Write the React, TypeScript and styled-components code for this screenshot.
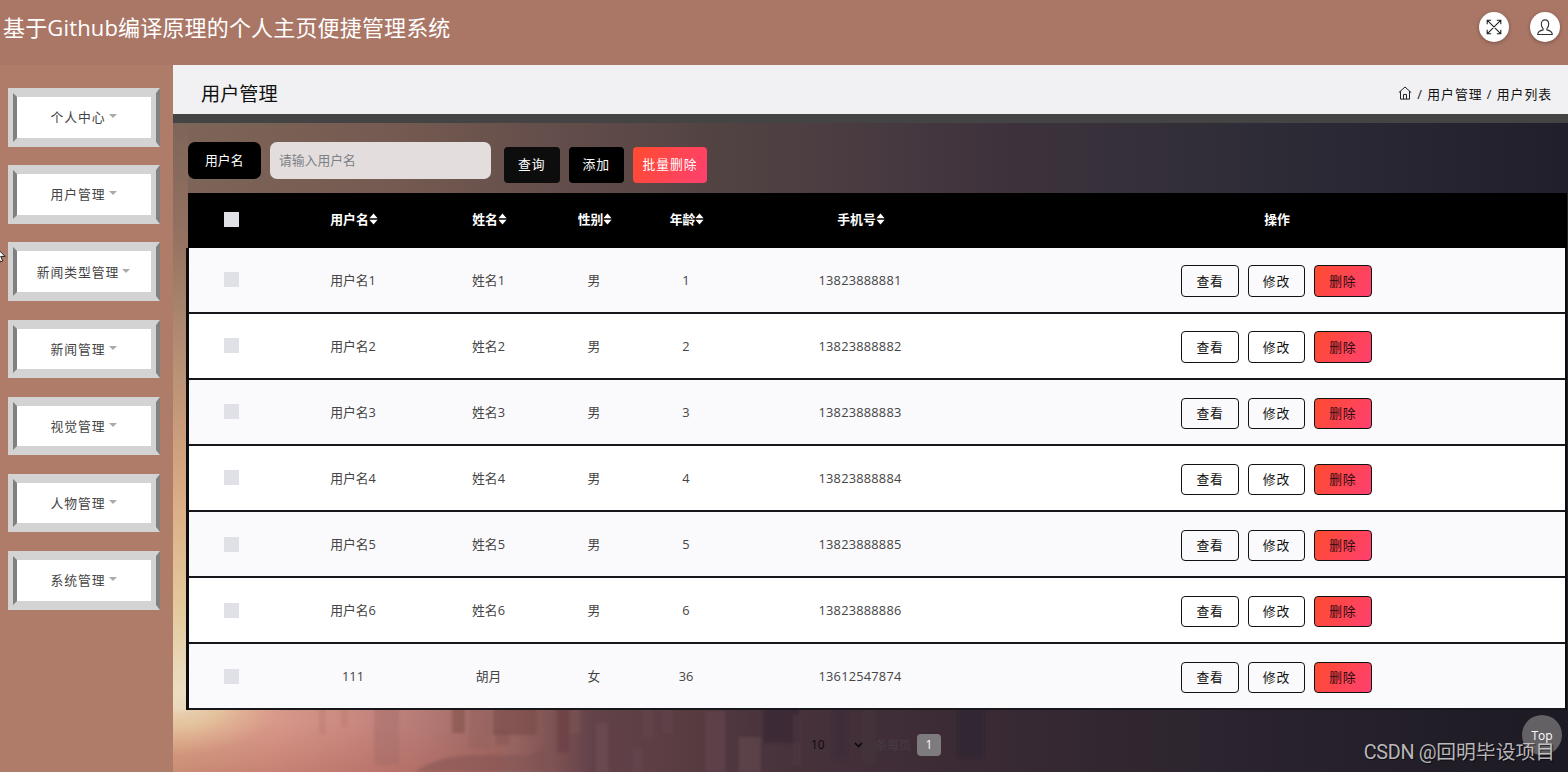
import React from "react";
import styled, { createGlobalStyle } from "styled-components";

const Global = createGlobalStyle`
  * { box-sizing: border-box; }
  html, body { margin: 0; padding: 0; }
  body {
    width: 1568px;
    height: 772px;
    overflow: hidden;
    font-family: "Open Sans", "Noto Sans CJK SC", sans-serif;
    font-size: 12.8px;
    color: #444;
  }
  button, input { font-family: inherit; }
`;

const Page = styled.div`
  position: relative;
  display: flex;
  flex-direction: column;
  width: 1568px;
  height: 772px;
  overflow: hidden;
  background: #b07c6a;
`;

const Header = styled.header`
  display: flex;
  justify-content: space-between;
  flex: none;
  height: 65px;
  padding: 12px 8px 0 3px;
  background: #aa7766;
`;

const Brand = styled.h1`
  margin: -2px 0 0;
  font-size: 22px;
  line-height: 34px;
  font-weight: 400;
  letter-spacing: 0.16px;
  color: #fff;
  white-space: nowrap;
`;

const HeaderActions = styled.div`
  display: flex;
  gap: 21px;
`;

const RoundButton = styled.button`
  display: flex;
  align-items: center;
  justify-content: center;
  width: 30px;
  height: 30px;
  padding: 0;
  border: 0;
  border-radius: 50%;
  background: #fff;
  box-shadow: 0 1px 4px rgba(0, 0, 0, 0.3);
`;

const Body = styled.div`
  display: flex;
  flex: 1;
  min-height: 0;
`;

const Sidebar = styled.nav`
  display: flex;
  flex-direction: column;
  gap: 18.7px;
  flex: none;
  width: 173px;
  padding: 23px 13px 0 8px;
`;

const MenuItem = styled.a`
  flex: none;
  height: 58.5px;
  border-style: solid;
  border-width: 5px 4px 5px 5px;
  border-color: #d3d3d3 #808080 #d3d3d3 #d3d3d3;
`;

const MenuFace = styled.span`
  display: flex;
  align-items: center;
  justify-content: center;
  gap: 3px;
  height: 100%;
  padding-right: 1px;
  border-style: solid;
  border-width: 4px 5px 4px 4px;
  border-color: #d3d3d3 #d3d3d3 #d3d3d3 #808080;
  background: #fff;
  letter-spacing: 0.95px;
  line-height: 20px;
`;

const Caret = styled.i`
  width: 0;
  height: 0;
  margin-top: -2px;
  border: 4px solid transparent;
  border-top-color: #aaa;
  border-bottom: 0;
`;

const Main = styled.main`
  position: relative;
  display: flex;
  flex-direction: column;
  flex: 1;
  min-width: 0;
`;

const Scenery = styled.svg`
  position: absolute;
  left: 0;
  top: 58px;
`;

const TitleBar = styled.div`
  position: relative;
  display: flex;
  justify-content: space-between;
  flex: none;
  height: 58px;
  padding: 0 16px 0 28px;
  border-bottom: 9px solid #444;
  background: #f1f1f3;
`;

const PageTitle = styled.h2`
  margin: 0;
  padding-top: 16px;
  font-size: 19.2px;
  line-height: 26px;
  font-weight: 400;
  color: #111;
`;

const Crumbs = styled.div`
  display: flex;
  align-items: center;
  gap: 5px;
  height: 20px;
  margin-top: 18px;
  letter-spacing: 1px;
  color: #111;
`;

const Content = styled.section`
  position: relative;
  display: flex;
  flex-direction: column;
  padding: 18.6px 1px 0 13px;
`;

const Toolbar = styled.div`
  display: flex;
  height: 51px;
  padding-left: 1.5px;
`;

const FieldLabel = styled.label`
  display: flex;
  align-items: center;
  justify-content: center;
  width: 73.500px;
  height: 37px;
  margin-right: 9px;
  padding-bottom: 1px;
  border-radius: 7px;
  background: #000;
  color: #fff;
`;

const Search = styled.input`
  width: 221px;
  height: 37px;
  margin-right: 13px;
  padding: 0 9px 1px;
  border: 0;
  border-radius: 7px;
  background: #e3dedd;
  font-size: 12.8px;
  &::placeholder { color: #7d8086; opacity: 1; }
`;

const ToolButton = styled.button<{ $tone?: "dim" | "danger"; $wide?: boolean }>`
  width: ${(p) => (p.$wide ? 74 : 55.5)}px;
  height: 36.5px;
  margin: 5px 9px 0 0;
  padding: 0 0 3px;
  border: 0;
  border-radius: 4px;
  font-size: 12.8px;
  letter-spacing: 0.9px;
  color: #fff;
  background: ${(p) =>
    p.$tone === "danger"
      ? "linear-gradient(120deg, #ff4b2f, #ff4070)"
      : p.$tone === "dim"
        ? "#0e0d0d"
        : "#000"};
`;

const TableHead = styled.div`
  display: grid;
  grid-template-columns: 89.5px 154px 117px 94px 90px 258px 1fr;
  align-items: center;
  height: 55px;
  margin: 0 0 0 1.5px;
  padding: 0 3px 1.600px 0;
  background: #000;
  color: #fff;
  font-weight: 700;
`;

const TableBody = styled.div`
  border: solid #0c0b0d;
  border-width: 0 2px 0 3px;
`;

const TableRow = styled.div<{ $odd: boolean }>`
  display: grid;
  grid-template-columns: 87px 154px 117px 94px 90px 258px 1fr;
  align-items: center;
  height: 66.1px;
  border-bottom: 2px solid #17161a;
  background: ${(p) => (p.$odd ? "#fafafc" : "#fff")};
`;

const Cell = styled.div<{ $digits?: boolean }>`
  display: flex;
  align-items: center;
  justify-content: center;
  line-height: 20px;
  letter-spacing: ${(p) => (p.$digits ? "0.23px" : "0")};
`;

const Check = styled.span`
  width: 15px;
  height: 15px;
  margin-right: 2px;
  background: #dfe1e6;
`;

const Actions = styled.div`
  display: flex;
  justify-content: center;
  gap: 9px;
  padding: 3px 1px 0 0;
`;

const RowButton = styled.button<{ $danger?: boolean }>`
  width: 57.4px;
  height: 31.5px;
  padding: 0 0 2px;
  border: 1px solid #111;
  border-radius: 4px;
  font-size: 12.8px;
  letter-spacing: 0.9px;
  color: ${(p) => (p.$danger ? "#2b0a12" : "#111")};
  background: ${(p) => (p.$danger ? "linear-gradient(120deg, #ff4b2f, #ff4070)" : "transparent")};
`;

const Pager = styled.div`
  display: flex;
  align-items: center;
  height: 22px;
  margin: 23.6px 0 0 625px;
  color: #0d0a0d;
  font-size: 12px;
`;

const PageSize = styled.span`
  display: flex;
  align-items: center;
  justify-content: space-between;
  width: 52px;
`;

const PerPage = styled.span`
  margin-left: 12px;
  width: 42px;
  color: #463c44;
`;

const PageNumber = styled.span`
  width: 24px;
  height: 22px;
  border-radius: 4px;
  background: #7e7b7e;
  color: #fff;
  line-height: 22px;
  text-align: center;
`;

const TopButton = styled.div`
  position: absolute;
  left: 1522px;
  top: 715px;
  width: 40px;
  height: 40px;
  border-radius: 50%;
  background: #636164;
  color: #fff;
  font-size: 12px;
  line-height: 41px;
  text-align: center;
`;

const Watermark = styled.div`
  position: absolute;
  right: 13px;
  top: 739px;
  font-family: Roboto, "Noto Sans CJK SC", sans-serif;
  font-size: 19.8px;
  line-height: 28px;
  color: rgba(215, 213, 216, 0.85);
  text-shadow: 1px 1px 1px rgba(0, 0, 0, 0.6);
  white-space: nowrap;
`;

const WatermarkSite = styled.span`
  letter-spacing: -0.3px;
`;

const Pointer = styled.svg`
  position: absolute;
  left: -5px;
  top: 246px;
`;

const SortIcon = () => (
  <svg width="9" height="12" viewBox="0 0 9 12">
    <path d="M4.5 .6 8.600 5.300H.4zM4.500 11.400.4 6.700h8.200z" fill="#fff" />
  </svg>
);

const ExpandIcon = () => (
  <svg width="16" height="16" viewBox="0 0 16 16" fill="none" stroke="#222" strokeWidth="1.1">
    <path d="M1.2 1.2 14.8 14.8M14.8 1.2 1.2 14.8M1.2 5.2v-4h4M10.8 1.2h4v4M14.8 10.8v4h-4M5.2 14.8h-4v-4" />
  </svg>
);

const UserIcon = () => (
  <svg width="16" height="17" viewBox="0 0 16 17" fill="none" stroke="#333" strokeWidth="1.1">
    <path d="M6.1 9.6C4.9 8.6 4.3 7 4.3 5.1 4.3 2.500 5.700.9 8 .9s3.700 1.600 3.700 4.200c0 1.900-.6 3.500-1.800 4.500v1.300c2.700.6 5.400 1.600 5.400 4.600H.7c0-3 2.700-4 5.400-4.600z" />
  </svg>
);

const HomeIcon = () => (
  <svg width="14" height="14" viewBox="0 0 14 14" fill="none" stroke="#222" strokeWidth="1">
    <path d="M.8 6.600 7 1l6.200 5.600M2.500 5.200v7.900h9V5.200M5.500 13V8.500h3V13" />
  </svg>
);

const menu = ["个人中心", "用户管理", "新闻类型管理", "新闻管理", "视觉管理", "人物管理", "系统管理"];
const heads = ["用户名", "姓名", "性别", "年龄", "手机号"];
const rows = [
  ["用户名1", "姓名1", "男", "1", "13823888881"],
  ["用户名2", "姓名2", "男", "2", "13823888882"],
  ["用户名3", "姓名3", "男", "3", "13823888883"],
  ["用户名4", "姓名4", "男", "4", "13823888884"],
  ["用户名5", "姓名5", "男", "5", "13823888885"],
  ["用户名6", "姓名6", "男", "6", "13823888886"],
  ["111", "胡月", "女", "36", "13612547874"],
];

/* x, y, width, height, fill, opacity of each tower in the skyline */
const towers: [number, number, number, number, string, number][] = [
  [146, 580, 7, 32, "#b8776c", 0.4],
  [168, 580, 7, 24, "#b8776c", 0.4],
  [201, 580, 25, 62, "#9a6860", 0.35],
  [279, 580, 13, 30, "#7a4a44", 0.5],
  [296, 580, 22, 46, "#8c5a55", 0.3],
  [320, 580, 44, 32, "#704541", 0.5],
  [322, 606, 14, 16, "#7d5050", 0.4],
  [384, 580, 12, 50, "#6a3c40", 0.6],
  [398, 580, 9, 30, "#7d5557", 0.5],
  [423, 600, 12, 49, "#75535a", 0.4],
  [470, 580, 10, 34, "#6b4a52", 0.35],
  [490, 580, 10, 30, "#6b4a52", 0.3],
  [460, 626, 9, 23, "#6b4a52", 0.4],
  [532, 588, 20, 61, "#67484f", 0.5],
  [566, 614, 22, 35, "#65474e", 0.6],
  [590, 580, 36, 40, "#34242f", 0.5],
  [620, 592, 8, 50, "#553a44", 0.3],
  [660, 580, 14, 56, "#32293a", 0.35],
  [690, 580, 12, 60, "#44343f", 0.4],
  [785, 585, 26, 50, "#241f29", 0.3],
];

const SceneryPicture = () => (
  <Scenery width="1395" height="649" viewBox="0 0 1395 649">
    <defs>
      <linearGradient id="sky">
        <stop offset="0" stopColor="#7e6559" />
        <stop offset=".16" stopColor="#745a50" />
        <stop offset=".28" stopColor="#634d4b" />
        <stop offset=".38" stopColor="#534443" />
        <stop offset=".52" stopColor="#463940" />
        <stop offset=".58" stopColor="#3f333d" />
        <stop offset=".74" stopColor="#312e38" />
        <stop offset=".88" stopColor="#272632" />
        <stop offset="1" stopColor="#211f2c" />
      </linearGradient>
      <linearGradient id="glow" x2="0" y2="1">
        <stop offset="0" stopColor="#7e6559" />
        <stop offset=".17" stopColor="#947160" />
        <stop offset=".34" stopColor="#b28c72" />
        <stop offset=".51" stopColor="#cfa17e" />
        <stop offset=".6" stopColor="#dcb088" />
        <stop offset=".75" stopColor="#e4ca9d" />
        <stop offset=".88" stopColor="#ecdec4" />
        <stop offset=".94" stopColor="#e2b990" />
        <stop offset="1" stopColor="#cf8e78" />
      </linearGradient>
      <linearGradient id="ground">
        <stop offset="0" stopColor="#dba98a" />
        <stop offset=".07" stopColor="#d8998a" />
        <stop offset=".13" stopColor="#c98880" />
        <stop offset=".173" stopColor="#b87c77" />
        <stop offset=".247" stopColor="#94625f" />
        <stop offset=".275" stopColor="#7c5152" />
        <stop offset=".3" stopColor="#63424a" />
        <stop offset=".36" stopColor="#5a3d42" />
        <stop offset=".42" stopColor="#4a343d" />
        <stop offset=".55" stopColor="#3c2b35" />
        <stop offset=".7" stopColor="#2f2630" />
        <stop offset="1" stopColor="#1c1a24" />
      </linearGradient>
      <radialGradient id="haze" gradientUnits="userSpaceOnUse" cx="0" cy="0" r="1" gradientTransform="translate(0 575) scale(110 58)">
        <stop offset="0" stopColor="#ecdec4" />
        <stop offset=".5" stopColor="#e6c8a2" stopOpacity=".8" />
        <stop offset="1" stopColor="#e2b08f" stopOpacity="0" />
      </radialGradient>
      <linearGradient id="dusk" x2="0" y2="1">
        <stop offset="0" stopColor="#a8584c" stopOpacity="0" />
        <stop offset="1" stopColor="#a8584c" stopOpacity=".35" />
      </linearGradient>
      <filter id="soft"><feGaussianBlur stdDeviation="1.6" /></filter>
    </defs>
    <rect width="1395" height="649" fill="url(#sky)" />
    <rect width="15" height="649" fill="url(#glow)" />
    <rect y="587" width="1395" height="62" fill="url(#ground)" />
    <rect y="600" width="330" height="49" fill="url(#dusk)" />
    <rect y="587" width="130" height="62" fill="url(#haze)" />
    <rect y="560" width="13" height="28" fill="#ecdcc0" opacity=".7" filter="url(#soft)" />
    <g filter="url(#soft)">
      {towers.map(([x, y, w, h, fill, o]) => (
        <rect key={x} x={x} y={y} width={w} height={h} fill={fill} opacity={o} />
      ))}
      <path d="M242 649c20-14 40-16 60-17h56l16-10v27z" fill="#7d4f4e" opacity=".45" />
    </g>
  </Scenery>
);

export default function App() {
  return (
    <Page>
      <Global />
      <Header>
        <Brand>基于Github编译原理的个人主页便捷管理系统</Brand>
        <HeaderActions>
          <RoundButton aria-label="全屏"><ExpandIcon /></RoundButton>
          <RoundButton aria-label="用户"><UserIcon /></RoundButton>
        </HeaderActions>
      </Header>
      <Body>
        <Sidebar>
          {menu.map((m) => (
            <MenuItem key={m}>
              <MenuFace>{m}<Caret /></MenuFace>
            </MenuItem>
          ))}
        </Sidebar>
        <Main>
          <SceneryPicture />
          <TitleBar>
            <PageTitle>用户管理</PageTitle>
            <Crumbs>
              <HomeIcon />
              <span>/ 用户管理 / 用户列表</span>
            </Crumbs>
          </TitleBar>
          <Content>
            <Toolbar>
              <FieldLabel>用户名</FieldLabel>
              <Search placeholder="请输入用户名" />
              <ToolButton $tone="dim">查询</ToolButton>
              <ToolButton>添加</ToolButton>
              <ToolButton $tone="danger" $wide>批量删除</ToolButton>
            </Toolbar>
            <TableHead>
              <Cell><Check /></Cell>
              {heads.map((h) => (
                <Cell key={h}>{h}<SortIcon /></Cell>
              ))}
              <Cell>操作</Cell>
            </TableHead>
            <TableBody>
              {rows.map((r, i) => (
                <TableRow key={r[0]} $odd={i % 2 === 0}>
                  <Cell><Check /></Cell>
                  {r.map((v, c) => (
                    <Cell key={c} $digits={c === 4}>{v}</Cell>
                  ))}
                  <Actions>
                    <RowButton>查看</RowButton>
                    <RowButton>修改</RowButton>
                    <RowButton $danger>删除</RowButton>
                  </Actions>
                </TableRow>
              ))}
            </TableBody>
            <Pager>
              <PageSize>
                10
                <svg width="9" height="6" viewBox="0 0 9 6" fill="none" stroke="#0d0a0d" strokeWidth="1.7">
                  <path d="m1 1 3.500 3.500L8 1" />
                </svg>
              </PageSize>
              <PerPage>条每页</PerPage>
              <PageNumber>1</PageNumber>
            </Pager>
          </Content>
        </Main>
      </Body>
      <TopButton>Top</TopButton>
      <Watermark><WatermarkSite>CSDN @</WatermarkSite>回明毕设项目</Watermark>
      <Pointer width="12" height="18" viewBox="0 0 12 18">
        <path d="M.5 1v13l3-2.800 2 4.800 2.200-1-2-4.600h4.500z" fill="#fff" stroke="#222" strokeWidth="1" />
      </Pointer>
    </Page>
  );
}
